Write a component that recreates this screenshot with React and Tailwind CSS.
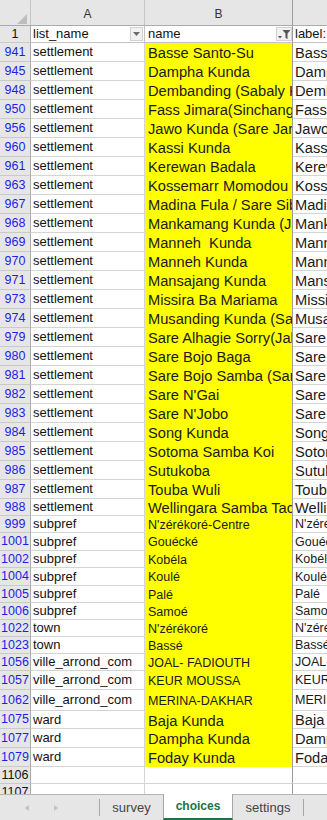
import React from "react";

const FONT = { fontFamily: '"Liberation Sans", Arial, sans-serif' };

// [row number, list_name, name, text size class, row height class]
const ROWS = [
  ["941", "settlement", "Basse Santo-Su", "text-[14.67px]", "h-[19px]"],
  ["945", "settlement", "Dampha Kunda", "text-[14.67px]", "h-[19px]"],
  ["948", "settlement", "Dembanding (Sabaly Kunda)", "text-[14.67px]", "h-[19px]"],
  ["950", "settlement", "Fass Jimara(Sinchang)", "text-[14.67px]", "h-[19px]"],
  ["956", "settlement", "Jawo Kunda (Sare Jarjou)", "text-[14.67px]", "h-[19px]"],
  ["960", "settlement", "Kassi Kunda", "text-[14.67px]", "h-[19px]"],
  ["961", "settlement", "Kerewan Badala", "text-[14.67px]", "h-[19px]"],
  ["963", "settlement", "Kossemarr Momodou", "text-[14.67px]", "h-[19px]"],
  ["967", "settlement", "Madina Fula / Sare Sibo", "text-[14.67px]", "h-[19px]"],
  ["968", "settlement", "Mankamang Kunda (Jula Kunda)", "text-[14.67px]", "h-[19px]"],
  ["969", "settlement", "Manneh\u00a0 Kunda", "text-[14.67px]", "h-[19px]"],
  ["970", "settlement", "Manneh Kunda", "text-[14.67px]", "h-[19px]"],
  ["971", "settlement", "Mansajang Kunda", "text-[14.67px]", "h-[19px]"],
  ["973", "settlement", "Missira Ba Mariama", "text-[14.67px]", "h-[19px]"],
  ["974", "settlement", "Musanding Kunda (Sare Musa)", "text-[14.67px]", "h-[19px]"],
  ["979", "settlement", "Sare Alhagie Sorry(Jallow)", "text-[14.67px]", "h-[19px]"],
  ["980", "settlement", "Sare Bojo Baga", "text-[14.67px]", "h-[19px]"],
  ["981", "settlement", "Sare Bojo Samba (Sare Bojo)", "text-[14.67px]", "h-[19px]"],
  ["982", "settlement", "Sare N'Gai", "text-[14.67px]", "h-[19px]"],
  ["983", "settlement", "Sare N'Jobo", "text-[14.67px]", "h-[19px]"],
  ["984", "settlement", "Song Kunda", "text-[14.67px]", "h-[19px]"],
  ["985", "settlement", "Sotoma Samba Koi", "text-[14.67px]", "h-[19px]"],
  ["986", "settlement", "Sutukoba", "text-[14.67px]", "h-[19px]"],
  ["987", "settlement", "Touba Wuli", "text-[14.67px]", "h-[19px]"],
  ["988", "settlement", "Wellingara Samba Tacko", "text-[14.67px]", "h-[17px]"],
  ["999", "subpref", "N'zérékoré-Centre", "text-[12.5px]", "h-[17px]"],
  ["1001", "subpref", "Gouécké", "text-[12.5px]", "h-[18px]"],
  ["1002", "subpref", "Kobéla", "text-[12.5px]", "h-[17px]"],
  ["1004", "subpref", "Koulé", "text-[12.5px]", "h-[18px]"],
  ["1005", "subpref", "Palé", "text-[12.5px]", "h-[17px]"],
  ["1006", "subpref", "Samoé", "text-[12.5px]", "h-[17px]"],
  ["1022", "town", "N'zérékoré", "text-[12.5px]", "h-[17px]"],
  ["1023", "town", "Bassé", "text-[12.5px]", "h-[17px]"],
  ["1056", "ville_arrond_com", "JOAL- FADIOUTH", "text-[12.5px]", "h-[17px]"],
  ["1057", "ville_arrond_com", "KEUR MOUSSA", "text-[12.5px]", "h-[19px]"],
  ["1062", "ville_arrond_com", "MERINA-DAKHAR", "text-[12.5px]", "h-[21px]"],
  ["1075", "ward", "Baja Kunda", "text-[14.67px]", "h-[18px]"],
  ["1077", "ward", "Dampha Kunda", "text-[14.67px]", "h-[19px]"],
  ["1079", "ward", "Foday Kunda", "text-[14.67px]", "h-[19px]"],
];

const EMPTY = ["1106", "1107"];

const DataRow = ({ row }) => {
  const [num, list, name, size, h] = row;
  return (
    <div className={`flex shrink-0 ${h}`}>
      <div className="w-[31px] shrink-0 flex items-center justify-center bg-[#e6e6e6] border-r border-r-[#ababab] border-b border-b-[#c9c9c9] text-[12.5px] text-[#1e1ee8]">
        {num}
      </div>
      <div className="w-[114px] shrink-0 flex items-center pl-[2px] border-r border-b border-[#d4d4d4] text-[13px] text-[#111] overflow-hidden whitespace-nowrap">
        {list}
      </div>
      <div className={`w-[148px] shrink-0 flex items-center pl-[3px] pt-[1px] bg-[#ffff00] border-r border-r-[#9c9c9c] text-[#1a1a1a] overflow-hidden whitespace-nowrap ${size}`}>
        {name}
      </div>
      <div className={`flex-1 min-w-0 flex items-center pl-[2px] pt-[1px] border-b border-[#d4d4d4] text-[#1a1a1a] overflow-hidden whitespace-nowrap ${size}`}>
        {name}
      </div>
    </div>
  );
};

const EmptyRow = ({ num }) => (
  <div className="flex shrink-0 h-[17px]">
    <div className="w-[31px] shrink-0 flex items-center justify-center bg-[#e6e6e6] border-r border-r-[#ababab] border-b border-b-[#c9c9c9] text-[12.5px] text-[#111]">
      {num}
    </div>
    <div className="w-[114px] shrink-0 border-r border-b border-[#d4d4d4]" />
    <div className="w-[148px] shrink-0 border-r border-r-[#9c9c9c] border-b border-b-[#d4d4d4]" />
    <div className="flex-1 border-b border-[#d4d4d4]" />
  </div>
);

export default function App() {
  return (
    <div className="w-[327px] h-[820px] flex flex-col overflow-hidden bg-white" style={FONT}>
      {/* grid */}
      <div className="h-[794px] flex flex-col overflow-hidden">
        {/* column letters */}
        <div className="flex shrink-0 h-[26px] bg-[#e6e6e6] border-b border-[#ababab] text-[12px] text-[#333]">
          <div className="w-[31px] shrink-0 flex items-end justify-end pr-[3px] pb-[1px] border-r border-[#c6c6c6]">
            <svg width="10" height="10" viewBox="0 0 10 10">
              <polygon points="10,0 10,10 0,10" fill="#bdbdbd" />
            </svg>
          </div>
          <div className="w-[114px] shrink-0 flex items-end justify-center pb-[2px] border-r border-[#c6c6c6]">A</div>
          <div className="w-[148px] shrink-0 flex items-end justify-center pb-[2px] border-r border-[#9c9c9c]">B</div>
          <div className="flex-1" />
        </div>

        {/* header row */}
        <div className="flex shrink-0 h-[17px]">
          <div className="w-[31px] shrink-0 flex items-center justify-center bg-[#e6e6e6] border-r border-r-[#ababab] border-b border-b-[#c9c9c9] text-[12.5px] text-[#111]">
            1
          </div>
          <div className="w-[114px] shrink-0 flex items-center justify-between pl-[2px] pr-[1px] border-r border-b border-[#c4c4c4] text-[13px] text-[#111]">
            <span>list_name</span>
            <div className="w-[13px] h-[14px] flex items-center justify-center bg-[#f1f1f1] border border-[#d2d2d2]">
              <svg width="7" height="4" viewBox="0 0 7 4">
                <polygon points="0,0 7,0 3.5,4" fill="#6b6b6b" />
              </svg>
            </div>
          </div>
          <div className="w-[148px] shrink-0 flex items-center justify-between pl-[3px] border-r border-r-[#9c9c9c] border-b border-b-[#c4c4c4] text-[13px] text-[#111]">
            <span>name</span>
            <div className="w-[16px] h-[14px] flex items-center justify-center bg-[#f1f1f1] border border-[#d2d2d2]">
              <svg width="14" height="12" viewBox="0 0 14 12">
                <polygon points="1,8 5,8 3,10.5" fill="#555" />
                <polygon points="5.5,2 13.5,2 10.5,5.5 10.5,11 8.5,10 8.5,5.5" fill="#555" />
              </svg>
            </div>
          </div>
          <div className="flex-1 min-w-0 flex items-center pl-[2px] border-b border-[#c4c4c4] text-[13px] text-[#111] overflow-hidden whitespace-nowrap">
            label::English
          </div>
        </div>

        {ROWS.map((r) => (
          <DataRow key={r[0]} row={r} />
        ))}
        {EMPTY.map((n) => (
          <EmptyRow key={n} num={n} />
        ))}
      </div>

      {/* sheet tabs */}
      <div className="h-[26px] shrink-0 flex items-stretch bg-[#e6e6e6] border-t border-[#b4b4b4] text-[13px] text-[#444]">
        <div className="w-[99px] shrink-0 flex items-center">
          <svg className="ml-[25px]" width="4" height="6" viewBox="0 0 4 6">
            <polygon points="4,0 4,6 0,3" fill="#c2c2c2" />
          </svg>
          <svg className="ml-[25px]" width="4" height="6" viewBox="0 0 4 6">
            <polygon points="0,0 0,6 4,3" fill="#c2c2c2" />
          </svg>
        </div>
        <div className="w-px bg-[#a6a6a6] my-[4px]" />
        <div className="w-[63px] flex items-center justify-center">survey</div>
        <div className="w-[70px] flex items-center justify-center bg-white border-x border-[#a6a6a6] border-b-2 border-b-[#217346] -mt-px font-bold text-[12px] text-[#217346]">
          choices
        </div>
        <div className="w-[70px] flex items-center justify-center">settings</div>
        <div className="w-px bg-[#a6a6a6] my-[4px]" />
        <div className="flex-1" />
      </div>
    </div>
  );
}
